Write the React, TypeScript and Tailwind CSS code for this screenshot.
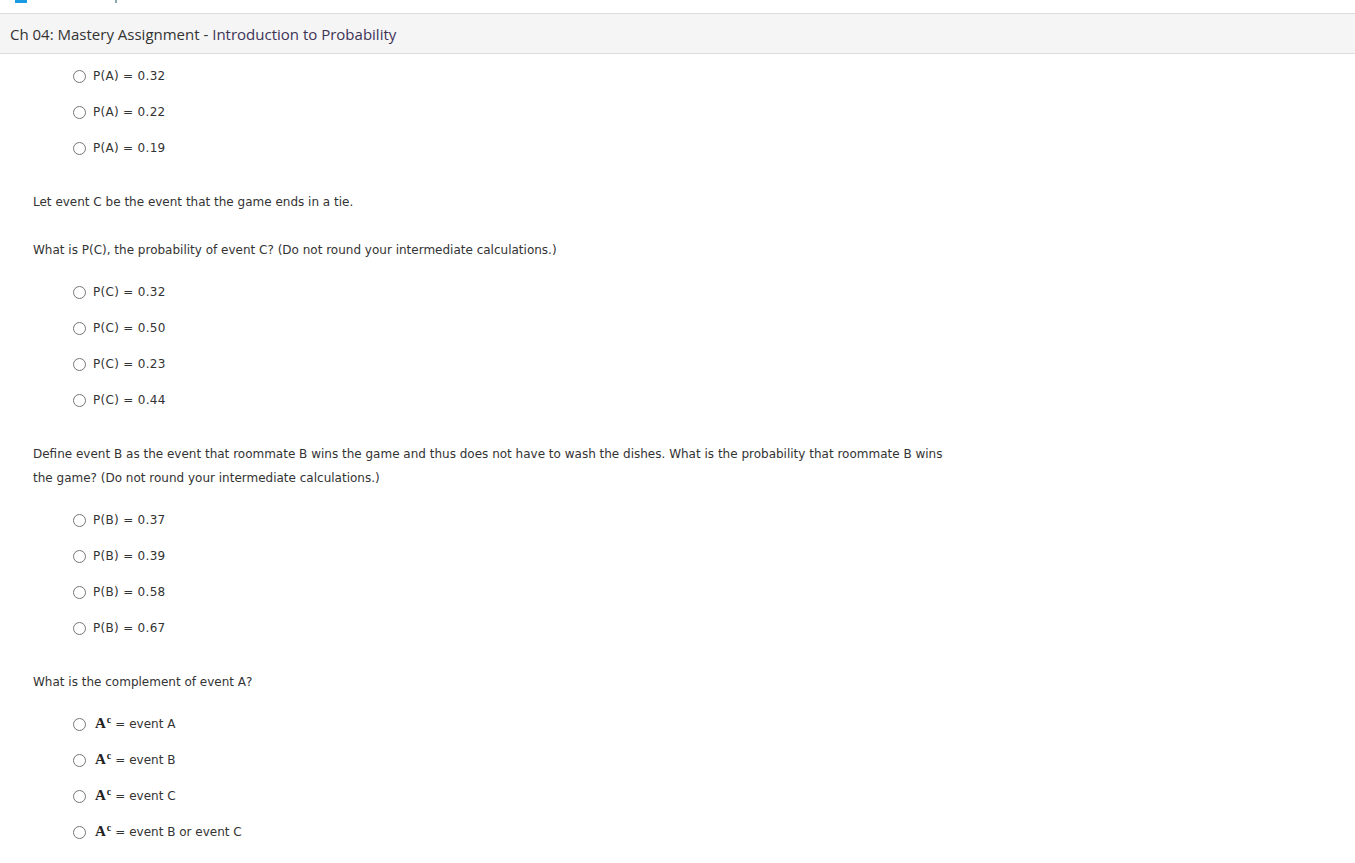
import React from "react";

const font = { fontFamily: '"DejaVu Sans", Verdana, Tahoma, sans-serif' };

function Radio() {
  return <span className="inline-block w-[13px] h-[13px] rounded-full border border-[#767676] bg-white shrink-0" />;
}

function Opt({ children, plain }: { children: React.ReactNode; plain?: boolean }) {
  return (
    <div className="flex items-center h-6 pl-[73px]">
      <Radio />
      <span className={plain ? "ml-[7px] text-[12px] text-[#333]" : "ml-[7px] text-[12px] text-[#333] tracking-[0.3px]"}>{children}</span>
    </div>
  );
}

function Ac() {
  return (
    <span className="inline-flex items-start ml-[2px] mr-[4px] text-[#222]" style={{ fontFamily: '"Liberation Serif", "DejaVu Serif", serif' }}>
      <span className="text-[15px] font-bold leading-none">A</span>
      <span className="text-[10px] font-bold leading-none ml-[1px] -mt-[1px]">c</span>
    </span>
  );
}

function Options({ items, ac }: { items: string[]; ac?: boolean }) {
  return (
    <div className="flex flex-col gap-3">
      {items.map((t) => (
        <Opt key={t} plain={ac}>
          {ac ? (
            <span className="inline-flex items-center">
              <Ac />
              <span>{t}</span>
            </span>
          ) : (
            t
          )}
        </Opt>
      ))}
    </div>
  );
}

function P({ children }: { children: React.ReactNode }) {
  return <p className="pl-[33px] pr-4 text-[12px] leading-6 text-[#333] max-w-[960px]">{children}</p>;
}

export default function App() {
  return (
    <div className="min-h-[863px] bg-white" style={font}>
      <div className="h-[13px] relative">
        <div className="absolute left-[15px] top-0 w-[12px] h-[3px] bg-[#1a9ae0]" />
        <div className="absolute left-[115px] top-0 w-[2px] h-[3px] bg-[#8aa]" />
      </div>
      <div className="h-[41px] bg-[#f5f5f5] border-y border-[#dcdcdc] flex items-center pl-[10px] pt-[1px]">
        <span className="text-[15px] text-[#333]" style={{ fontFamily: '"Open Sans", sans-serif' }}>
          Ch 04: Mastery Assignment - <span className="text-[#3d3356]">Introduction to Probability</span>
        </span>
      </div>
      <div className="pt-[10px]">
        <Options items={["P(A) = 0.32", "P(A) = 0.22", "P(A) = 0.19"]} />
        <div className="mt-[30px]">
          <P>Let event C be the event that the game ends in a tie.</P>
        </div>
        <div className="mt-6">
          <P>What is P(C), the probability of event C? (Do not round your intermediate calculations.)</P>
        </div>
        <div className="mt-[18px]">
          <Options items={["P(C) = 0.32", "P(C) = 0.50", "P(C) = 0.23", "P(C) = 0.44"]} />
        </div>
        <div className="mt-[30px]">
          <P>
            Define event B as the event that roommate B wins the game and thus does not have to wash the dishes. What is the probability that roommate B wins the game? (Do not round your intermediate calculations.)
          </P>
        </div>
        <div className="mt-[18px]">
          <Options items={["P(B) = 0.37", "P(B) = 0.39", "P(B) = 0.58", "P(B) = 0.67"]} />
        </div>
        <div className="mt-[30px]">
          <P>What is the complement of event A?</P>
        </div>
        <div className="mt-[18px]">
          <Options ac items={["= event A", "= event B", "= event C", "= event B or event C"]} />
        </div>
      </div>
    </div>
  );
}
